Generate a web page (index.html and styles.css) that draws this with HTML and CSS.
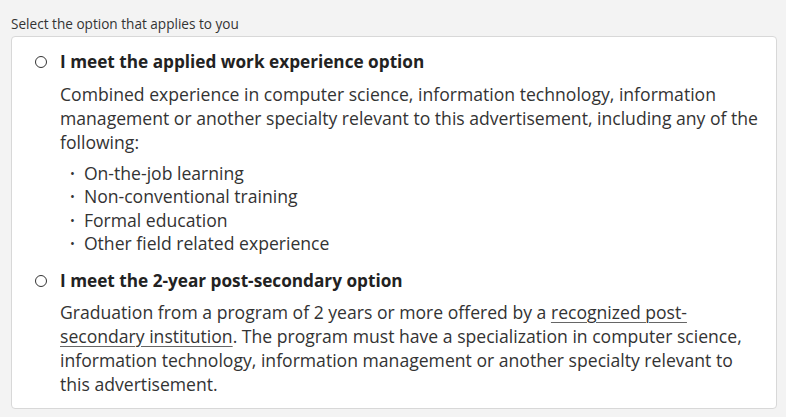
FILE: index.html
```html
<html>
  <head>
    <title>Options</title>
    <link rel="stylesheet" href="styles.css">
  </head>
  <body>
  <div id="wrapper">
    <div class="prompt">Select the option that applies to you</div>
    <div class="card">
      <div class="option">
        <div class="option-head"><span class="radio"></span><span class="option-title">I meet the applied work experience option</span></div>
        <div class="option-body">
          <p>Combined experience in computer science, information technology, information management or another specialty relevant to this advertisement, including any of the following:</p>
          <ul>
            <li>On-the-job learning</li>
            <li>Non-conventional training</li>
            <li>Formal education</li>
            <li>Other field related experience</li>
          </ul>
        </div>
      </div>
      <div class="option">
        <div class="option-head"><span class="radio"></span><span class="option-title">I meet the 2-year post-secondary option</span></div>
        <div class="option-body short">
          <p>Graduation from a program of 2 years or more offered by a <a href="#">recognized post-secondary institution</a>. The program must have a specialization in computer science, information technology, information management or another specialty relevant to this advertisement.</p>
        </div>
      </div>
    </div>
  </div>
  </body>
</html>
```

FILE: styles.css
```css
body { margin: 0px; font-family: "Open Sans", "Noto Sans", sans-serif; background: #f3f3f3; color: #333; }
p { margin: 0px; }
ul { margin: 0px; padding: 0px; list-style: none; }

#wrapper { padding: 15px 9px 0 11px; }

.prompt { font-size: 13.6px; line-height: 18px; color: #333; margin-bottom: 3px; }
.card { background: #fff; border: 1px solid #d8d8d8; border-radius: 4px; padding: 13px 14px 12px 23px; }

.option { margin-bottom: 13px; }
.option:last-child { margin-bottom: 0px; }
.option-head { display: flex; align-items: center; gap: 13px; font-size: 17.2px; line-height: 24px; }
.radio { width: 10px; height: 10px; border: 1.2px solid #333; border-radius: 50%; flex: none; }
.option-title { font-weight: bold; color: #222; }

.option-body { padding-left: 25px; margin-top: 8px; font-size: 17.6px; line-height: 24px; }
.option-body.short { margin-top: 7px; }
.option-body ul { margin-top: 8px; padding-left: 10px; }
.option-body li { display: flex; align-items: center; gap: 9px; height: 23.4px; line-height: 23.4px; }
.option-body li:before { content: "\2022"; font-size: 13px; }
.option-body a { color: #333; text-decoration: underline; text-decoration-color: #666; text-underline-offset: 3px; text-decoration-thickness: 1px; }
```
